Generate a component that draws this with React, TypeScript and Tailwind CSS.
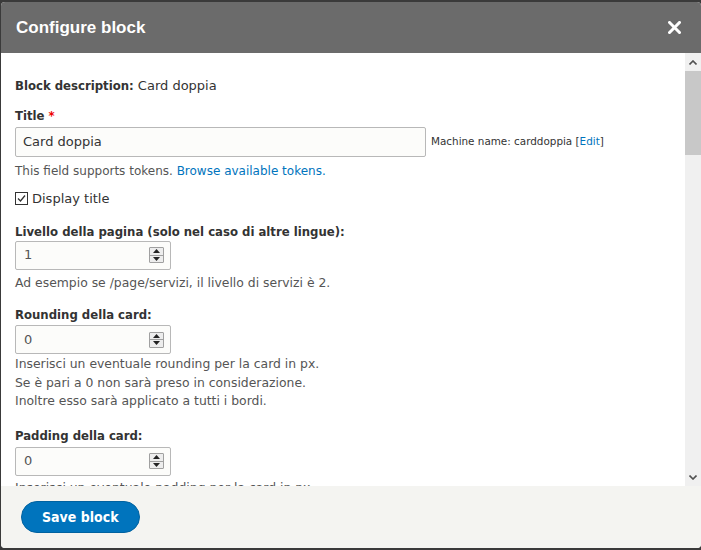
import React from 'react'

const bold = { fontFamily: '"DejaVu Sans Condensed", "DejaVu Sans", sans-serif' }

const Spinner = () => (
  <div className="flex flex-col w-[15px] h-[16px] border border-[#a0a0a0] bg-[#ededed] rounded-[1px]">
    <div className="flex-1 flex items-center justify-center border-b border-[#a0a0a0]">
      <svg width="7" height="4" viewBox="0 0 7 4"><path d="M0 4 L3.5 0 L7 4 Z" fill="#222" /></svg>
    </div>
    <div className="flex-1 flex items-center justify-center">
      <svg width="7" height="4" viewBox="0 0 7 4"><path d="M0 0 L3.5 4 L7 0 Z" fill="#222" /></svg>
    </div>
  </div>
)

const NumberField = ({ value }: { value: string }) => (
  <div className="w-[156px] h-[29px] border border-[#b8b8b8] rounded-[2px] bg-[#fcfcfa] flex items-center justify-between pl-[8px] pr-[6px] text-[13px] text-[#555]">
    <span>{value}</span>
    <Spinner />
  </div>
)

const Label = ({ children, className = '' }: { children: React.ReactNode; className?: string }) => (
  <div className={`text-[13px] font-bold text-[#333] leading-[18px] ${className}`} style={bold}>{children}</div>
)

const Desc = ({ children, className = '' }: { children: React.ReactNode; className?: string }) => (
  <div className={`text-[12.4px] text-[#555] leading-[18.5px] ${className}`}>{children}</div>
)

export default function App() {
  return (
    <div className="w-[701px] h-[550px] bg-[#3a3a3a] pt-[2px] pb-[2px] pl-[1px] overflow-hidden" style={{ fontFamily: '"DejaVu Sans", sans-serif' }}>
      <div className="w-[700px] h-[546px] flex flex-col rounded-[4px] overflow-hidden bg-white">
        {/* Header */}
        <div className="h-[51px] shrink-0 bg-[#6b6b6b] flex items-center justify-between pl-[15px] pr-[20px]">
          <div className="text-white font-bold text-[17px]" style={{ fontFamily: '"Liberation Sans", sans-serif' }}>Configure block</div>
          <svg width="13" height="13" viewBox="0 0 13 13">
            <path d="M1.5 1.5 L11.5 11.5 M11.5 1.5 L1.5 11.5" stroke="#fff" strokeWidth="3" strokeLinecap="square" />
          </svg>
        </div>

        {/* Body */}
        <div className="flex-1 flex overflow-hidden">
          <div className="flex-1 overflow-hidden pl-[14px] pt-[24px]">
            <div className="text-[13px] text-[#333] leading-[18px]">
              <span className="font-bold" style={bold}>Block description:</span> Card doppia
            </div>

            <Label className="mt-[12px]">Title <span className="text-[#e00]">*</span></Label>
            <div className="flex items-center mt-[2px]">
              <div className="w-[411px] h-[30px] border border-[#b8b8b8] rounded-[2px] bg-[#fcfcfa] flex items-center pl-[7px] text-[13px] text-[#333]">Card doppia</div>
              <div className="ml-[5px] text-[10.4px] text-[#333]">Machine name: carddoppia [<span className="text-[#0074bd]">Edit</span>]</div>
            </div>
            <Desc className="mt-[5px] text-[12px]">This field supports tokens. <span className="text-[#0074bd]">Browse available tokens.</span></Desc>

            <div className="flex items-center mt-[9px] text-[13px] text-[#333] leading-[18px]">
              <svg width="13" height="13" viewBox="0 0 13 13" className="mr-[4px]">
                <rect x="0.5" y="0.5" width="12" height="12" fill="#fff" stroke="#333" />
                <path d="M3 6.5 L5.5 9 L10 3.5" fill="none" stroke="#333" strokeWidth="1.3" />
              </svg>
              Display title
            </div>

            <Label className="mt-[15px]">Livello della pagina (solo nel caso di altre lingue):</Label>
            <div className="mt-[0px]"><NumberField value="1" /></div>
            <Desc className="mt-[4px]">Ad esempio se /page/servizi, il livello di servizi è 2.</Desc>

            <Label className="mt-[14px]">Rounding della card:</Label>
            <div className="mt-[1px]"><NumberField value="0" /></div>
            <Desc className="mt-[1px]">Inserisci un eventuale rounding per la card in px.</Desc>
            <Desc>Se è pari a 0 non sarà preso in considerazione.</Desc>
            <Desc>Inoltre esso sarà applicato a tutti i bordi.</Desc>

            <Label className="mt-[16px]">Padding della card:</Label>
            <div className="mt-[2px]"><NumberField value="0" /></div>
            <Desc className="mt-[3px]">Inserisci un eventuale padding per la card in px.</Desc>
          </div>

          {/* Scrollbar */}
          <div className="w-[16px] shrink-0 bg-[#f0f0f0] flex flex-col">
            <div className="h-[18px] flex items-center justify-center">
              <svg width="8" height="5" viewBox="0 0 8 5"><path d="M0.5 4.5 L4 1 L7.5 4.5" fill="none" stroke="#505050" strokeWidth="1.6" /></svg>
            </div>
            <div className="h-[84px] bg-[#c8c8c8]" />
            <div className="flex-1" />
            <div className="h-[17px] flex items-center justify-center">
              <svg width="8" height="5" viewBox="0 0 8 5"><path d="M0.5 0.5 L4 4 L7.5 0.5" fill="none" stroke="#505050" strokeWidth="1.6" /></svg>
            </div>
          </div>
        </div>

        {/* Footer */}
        <div className="h-[62px] shrink-0 bg-[#f4f4f1] flex items-center pl-[20px]">
          <div className="h-[32px] px-[20px] rounded-full bg-[#0074bd] border border-[#0062a0] flex items-center text-white font-bold text-[14px]" style={bold}>Save block</div>
        </div>
      </div>
    </div>
  )
}
